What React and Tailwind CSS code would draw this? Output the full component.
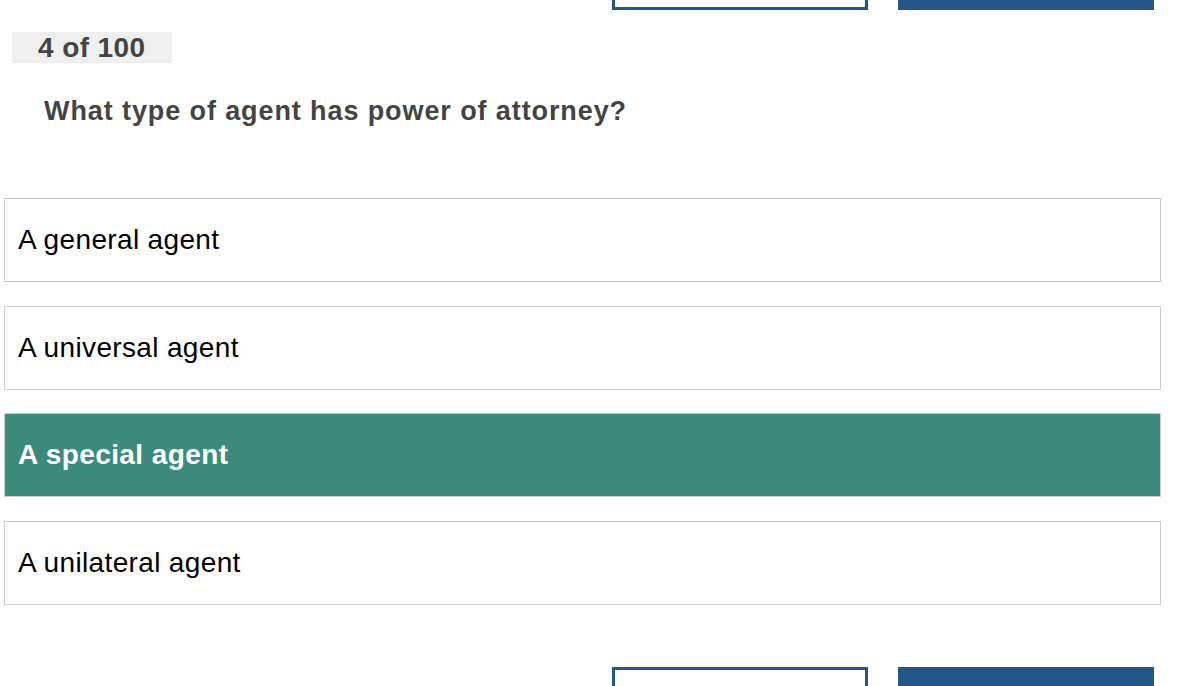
export default function App() {
  const options = [
    { text: "A general agent", selected: false },
    { text: "A universal agent", selected: false },
    { text: "A special agent", selected: true },
    { text: "A unilateral agent", selected: false },
  ];
  const font = { fontFamily: '"Liberation Sans", Arial, Helvetica, sans-serif' };
  return (
    <div className="w-[1204px] h-[686px] bg-white overflow-hidden" style={font}>
      <div className="h-[10px] overflow-hidden flex justify-end gap-[30px] pr-[50px]">
        <div className="w-[256px] h-[40px] -mt-[30px] border-[3px] border-[#24568a] bg-white shrink-0"></div>
        <div className="w-[256px] h-[40px] -mt-[30px] bg-[#24568a] shrink-0"></div>
      </div>
      <div className="mt-[22px] ml-[12px] w-[160px] h-[31px] bg-[#efefef] flex items-center pl-[26px] text-[28px] font-bold text-[#444444] leading-none tracking-[0.4px]">
        4 of 100
      </div>
      <div className="mt-[32px] ml-[44px] text-[27px] font-bold text-[#444444] leading-[32px] tracking-[0.9px]">
        What type of agent has power of attorney?
      </div>
      <div className="mt-[71px] ml-[4px] w-[1157px] flex flex-col gap-[23.6px]">
        {options.map((o) => (
          <div
            key={o.text}
            className={
              o.selected
                ? "h-[84px] border border-[#cccccc] bg-[#3d8b7d] text-white font-bold flex items-center pl-[13px] text-[28px] tracking-[0.4px]"
                : "h-[84px] border border-[#cccccc] bg-white text-black flex items-center pl-[13px] text-[28px] tracking-[0.35px]"
            }
          >
            {o.text}
          </div>
        ))}
      </div>
      <div className="mt-[62px] flex justify-end gap-[30px] pr-[50px]">
        <div className="w-[256px] h-[40px] border-[3px] border-[#24568a] bg-white shrink-0"></div>
        <div className="w-[256px] h-[40px] bg-[#24568a] shrink-0"></div>
      </div>
    </div>
  );
}
